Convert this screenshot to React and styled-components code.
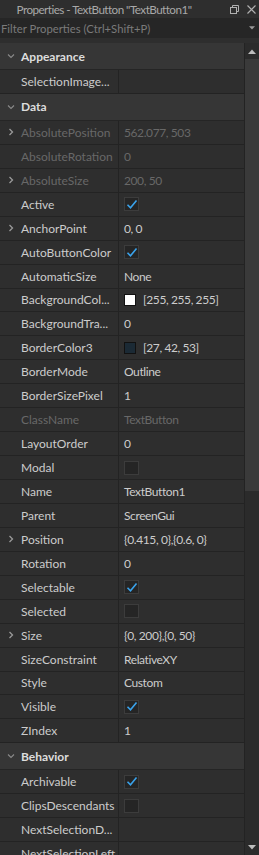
import React from 'react'
import styled, { createGlobalStyle } from 'styled-components'

const GlobalStyle = createGlobalStyle`
  html, body {
    margin: 0;
    padding: 0;
    background: #2e2e2e;
  }
  * {
    box-sizing: border-box;
  }
`

const Panel = styled.div`
  width: 259px;
  height: 855px;
  overflow: hidden;
  display: flex;
  flex-direction: column;
  background: #2e2e2e;
  font-family: Lato, 'Noto Sans', sans-serif;
  font-size: 12px;
  color: #cccccc;
`

const TitleBar = styled.div`
  height: 18px;
  flex: none;
  display: flex;
  align-items: center;
  background: #2e2e2e;
  color: #a8a8a8;
  font-size: 11.7px;
  letter-spacing: -0.55px;

  .title {
    flex: 1;
    text-align: center;
    padding-right: 22px;
    white-space: nowrap;
  }

  .icons {
    display: flex;
    gap: 8px;
    padding-right: 3px;
    align-items: center;
  }
`

const FilterBar = styled.div`
  height: 20px;
  flex: none;
  display: flex;
  align-items: center;
  justify-content: space-between;
  background: #262626;
  color: #7a7a7a;
  font-size: 11.3px;
  padding: 0 4px 0 1px;
  margin-bottom: 5px;
  white-space: nowrap;
`

const Body = styled.div`
  flex: 1;
  display: flex;
  min-height: 0;
`

const List = styled.div`
  flex: 1;
  display: flex;
  flex-direction: column;
  overflow: hidden;
  border-right: 1px solid #232323;
`

const SectionHeader = styled.div`
  height: 27px;
  flex: none;
  display: flex;
  align-items: center;
  background: #363636;
  border-bottom: 1px solid #252525;
  font-weight: 700;
  color: #dddddd;

  .chev {
    width: 21px;
    display: flex;
    justify-content: center;
  }
`

const Row = styled.div`
  height: 23.95px;
  flex: none;
  display: grid;
  grid-template-columns: 119px 1fr;
  border-bottom: 1px solid #232323;
  color: ${p => (p.$disabled ? '#686868' : '#cccccc')};
`

const NameCell = styled.div`
  display: flex;
  align-items: center;
  border-right: 1px solid #232323;
  white-space: nowrap;
  overflow: hidden;

  .arrow {
    width: 21px;
    flex: none;
    display: flex;
    justify-content: center;
  }
`

const ValueCell = styled.div`
  display: flex;
  align-items: center;
  padding-left: 5px;
  gap: 7px;
  white-space: nowrap;
  overflow: hidden;
  letter-spacing: -0.4px;
  color: ${p => (p.$disabled ? '#686868' : 'inherit')};
`

const CheckBox = styled.div`
  width: 15px;
  height: 14px;
  background: #252525;
  border: 1px solid #3c3c3c;
  display: flex;
  align-items: center;
  justify-content: center;
`

const Swatch = styled.div`
  width: 12px;
  height: 12px;
  border: 1px solid #111;
  background: ${p => p.$color};
`

const Scrollbar = styled.div`
  width: 14px;
  flex: none;
  display: flex;
  flex-direction: column;
  background: #2b2b2b;
`

const ScrollButton = styled.div`
  height: 16px;
  flex: none;
  display: flex;
  align-items: center;
  justify-content: center;
  background: #2b2b2b;
`

const Track = styled.div`
  flex: 1;
  display: flex;
  flex-direction: column;
`

const Thumb = styled.div`
  height: 432px;
  flex: none;
  background: #3a3a3a;
`

const Chevron = ({ open, color = '#8a8a8a' }) => (
  <svg width="8" height="8" viewBox="0 0 8 8">
    {open ? (
      <path d="M1 2.5 L4 5.5 L7 2.5" fill="none" stroke={color} strokeWidth="1.1" />
    ) : (
      <path d="M2.5 1 L5.5 4 L2.5 7" fill="none" stroke={color} strokeWidth="1.3" />
    )}
  </svg>
)

const Check = () => (
  <svg width="12" height="11" viewBox="0 0 12 11">
    <path d="M1.5 5.8 L4.5 8.8 L10.5 1.5" fill="none" stroke="#3aa3ec" strokeWidth="1.6" />
  </svg>
)

const Triangle = ({ up, size = 8, color = '#bdbdbd' }) => (
  <svg width={size} height={size / 2 + 1} viewBox="0 0 8 5">
    <path d={up ? 'M0 5 L4 0.5 L8 5 Z' : 'M0 0 L8 0 L4 4.5 Z'} fill={color} />
  </svg>
)

const sections = [
  {
    title: 'Appearance',
    rows: [{ name: 'SelectionImage...', value: '' }],
  },
  {
    title: 'Data',
    rows: [
      { name: 'AbsolutePosition', value: '562.077, 503', expand: true, disabled: true },
      { name: 'AbsoluteRotation', value: '0', disabled: true },
      { name: 'AbsoluteSize', value: '200, 50', expand: true, disabled: true },
      { name: 'Active', check: true },
      { name: 'AnchorPoint', value: '0, 0', expand: true },
      { name: 'AutoButtonColor', check: true },
      { name: 'AutomaticSize', value: 'None' },
      { name: 'BackgroundCol...', value: '[255, 255, 255]', color: '#ffffff' },
      { name: 'BackgroundTra...', value: '0' },
      { name: 'BorderColor3', value: '[27, 42, 53]', color: '#1b2a35' },
      { name: 'BorderMode', value: 'Outline' },
      { name: 'BorderSizePixel', value: '1' },
      { name: 'ClassName', value: 'TextButton', disabled: true, nameDisabled: true },
      { name: 'LayoutOrder', value: '0' },
      { name: 'Modal', check: false },
      { name: 'Name', value: 'TextButton1' },
      { name: 'Parent', value: 'ScreenGui' },
      { name: 'Position', value: '{0.415, 0},{0.6, 0}', expand: true },
      { name: 'Rotation', value: '0' },
      { name: 'Selectable', check: true },
      { name: 'Selected', check: false },
      { name: 'Size', value: '{0, 200},{0, 50}', expand: true },
      { name: 'SizeConstraint', value: 'RelativeXY' },
      { name: 'Style', value: 'Custom' },
      { name: 'Visible', check: true },
      { name: 'ZIndex', value: '1' },
    ],
  },
  {
    title: 'Behavior',
    rows: [
      { name: 'Archivable', check: true },
      { name: 'ClipsDescendants', check: false },
      { name: 'NextSelectionD...', value: '' },
      { name: 'NextSelectionLeft', value: '' },
    ],
  },
]

const PropertyRow = ({ row }) => (
  <Row $disabled={row.nameDisabled}>
    <NameCell>
      <span className="arrow">{row.expand && <Chevron color="#9a9a9a" />}</span>
      <span style={row.disabled ? { color: '#686868' } : undefined}>{row.name}</span>
    </NameCell>
    <ValueCell $disabled={row.disabled}>
      {row.check !== undefined ? (
        <CheckBox>{row.check && <Check />}</CheckBox>
      ) : (
        <>
          {row.color && <Swatch $color={row.color} />}
          <span>{row.value}</span>
        </>
      )}
    </ValueCell>
  </Row>
)

export default function App() {
  return (
    <>
      <GlobalStyle />
      <Panel>
        <TitleBar>
          <span className="title">Properties - TextButton "TextButton1"</span>
          <span className="icons">
            <svg width="9" height="9" viewBox="0 0 9 9">
              <rect x="0.5" y="2.5" width="6" height="6" fill="none" stroke="#b0b0b0" />
              <path d="M2.5 2.5 V0.5 H8.5 V6.5 H6.5" fill="none" stroke="#b0b0b0" />
            </svg>
            <svg width="9" height="9" viewBox="0 0 9 9">
              <path d="M0.5 0.5 L8.5 8.5 M8.5 0.5 L0.5 8.5" stroke="#b0b0b0" strokeWidth="1.1" />
            </svg>
          </span>
        </TitleBar>
        <FilterBar>
          <span>Filter Properties (Ctrl+Shift+P)</span>
          <Triangle size={6} color="#9a9a9a" />
        </FilterBar>
        <Body>
          <List>
            {sections.map(sec => (
              <React.Fragment key={sec.title}>
                <SectionHeader>
                  <span className="chev">
                    <Chevron open />
                  </span>
                  {sec.title}
                </SectionHeader>
                {sec.rows.map(r => (
                  <PropertyRow key={r.name} row={r} />
                ))}
              </React.Fragment>
            ))}
          </List>
          <Scrollbar>
            <ScrollButton>
              <Triangle up />
            </ScrollButton>
            <Track>
              <Thumb />
            </Track>
            <ScrollButton>
              <Triangle />
            </ScrollButton>
          </Scrollbar>
        </Body>
      </Panel>
    </>
  )
}
